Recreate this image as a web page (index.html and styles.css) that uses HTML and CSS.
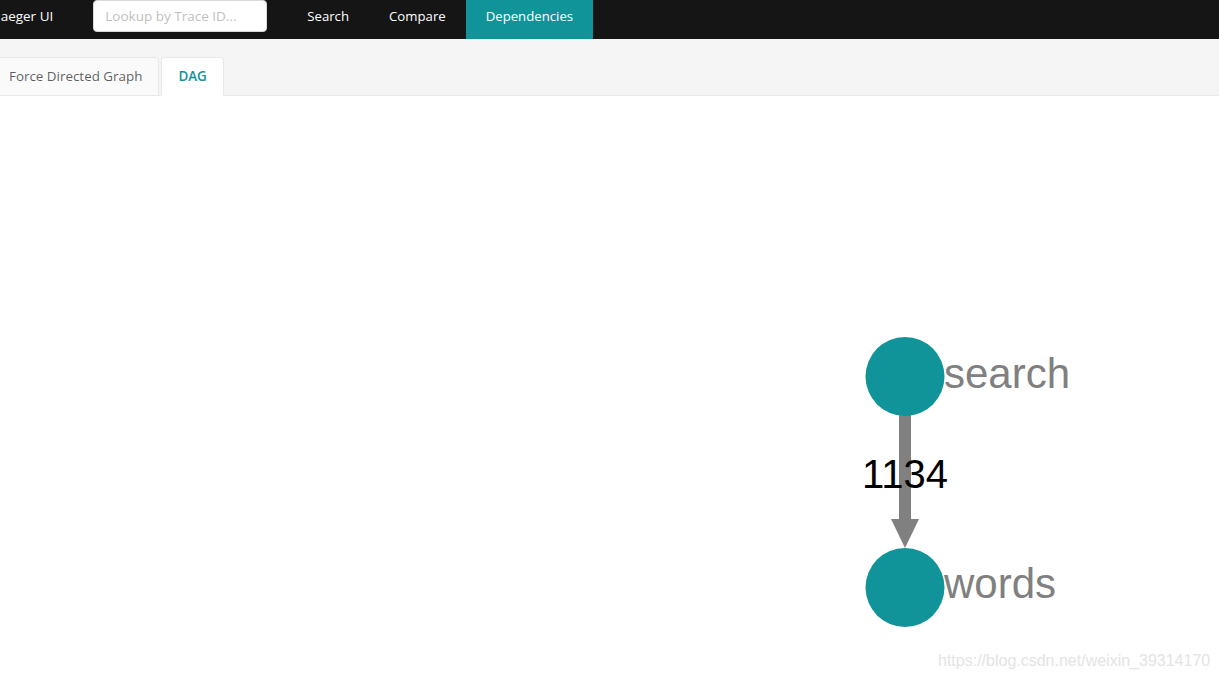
FILE: index.html
```html
<!DOCTYPE html>
<html lang="en">
<head>
    <meta charset="UTF-8">
    <title>Jaeger UI - Dependencies</title>
    <link rel="stylesheet" href="styles.css">
</head>
<body>
    <div class="page">
        <header class="topnav">
            <div class="brand">Jaeger UI</div>
            <input class="trace-lookup" type="text" placeholder="Lookup by Trace ID...">
            <nav class="menu">
                <a class="menu-item" href="#search">Search</a>
                <a class="menu-item" href="#compare">Compare</a>
                <a class="menu-item active" href="#dependencies">Dependencies</a>
            </nav>
        </header>

        <div class="tabs-bar">
            <div class="tab">Force Directed Graph</div>
            <div class="tab active">DAG</div>
        </div>
    </div>

    <div class="graph">
        <!-- DAG: search -> words -->
        <svg class="dag" width="1219" height="583" viewBox="0 0 1219 583">
            <line x1="905" y1="318" x2="905" y2="424" stroke="#808080" stroke-width="12"/>
            <polygon points="891,423 919,423 905,452" fill="#808080"/>
            <text class="edge-label" x="905" y="392" text-anchor="middle">1134</text>
            <circle cx="905" cy="280.5" r="39.5" fill="#11939a"/>
            <circle cx="905" cy="491.5" r="39.5" fill="#11939a"/>
            <text class="node-label" x="944" y="292">search</text>
            <text class="node-label" x="944" y="502">words</text>
        </svg>
        <div class="watermark">https://blog.csdn.net/weixin_39314170</div>
    </div>
</body>
</html>
```

FILE: styles.css
```css
body {
    margin: 0;
    padding: 0;
    overflow: hidden;
    background-color: #fff;
    font-family: 'Open Sans', 'Noto Sans', sans-serif;
    font-size: 13.2px;
}
/* page is scrolled a little to the right */
.page {
    margin-left: -24px;
}
.topnav {
    display: flex;
    align-items: flex-start;
    height: 39px;
    background-color: #151515;
    padding-left: 21px;
}
.brand {
    color: #fff;
    font-size: 13.5px;
    line-height: 32px;
    margin-right: 40px;
}
.trace-lookup {
    box-sizing: border-box;
    width: 174px;
    height: 32px;
    margin: 0 20px 0 0;
    padding: 0 11px;
    border: 1px solid #d9d9d9;
    border-radius: 4px;
    font-family: inherit;
    font-size: 13.5px;
    outline: none;
}
.trace-lookup::placeholder {
    color: #bfbfbf;
}
.menu {
    display: flex;
}
.menu-item {
    display: block;
    height: 39px;
    line-height: 32px;
    padding: 0 20px;
    color: #fff;
    text-decoration: none;
}
.menu-item.active {
    background-color: #11939a;
}
.tabs-bar {
    display: flex;
    align-items: flex-end;
    height: 56px;
    background-color: #f5f5f5;
    border-bottom: 1px solid #e8e8e8;
    padding-left: 16px;
}
.tab {
    box-sizing: border-box;
    height: 39px;
    line-height: 37px;
    padding: 0 16px;
    margin-right: 2px;
    margin-bottom: -1px;
    background-color: #fafafa;
    border: 1px solid #e8e8e8;
    border-radius: 4px 4px 0 0;
    color: rgba(0, 0, 0, 0.65);
    font-size: 13.4px;
}
.tab.active {
    background-color: #fff;
    border-bottom-color: #fff;
    color: #11939a;
    font-weight: 600;
}
.graph {
    position: relative;
}
.dag {
    display: block;
}
.edge-label {
    font-family: 'Liberation Sans', Arial, sans-serif;
    font-size: 40px;
    fill: #000;
}
.node-label {
    font-family: 'Liberation Sans', Arial, sans-serif;
    font-size: 42px;
    fill: #808080;
}
.watermark {
    position: absolute;
    left: 938px;
    top: 556px;
    font-family: 'Liberation Sans', Arial, sans-serif;
    font-size: 16px;
    color: #e4e4e4;
}
```
